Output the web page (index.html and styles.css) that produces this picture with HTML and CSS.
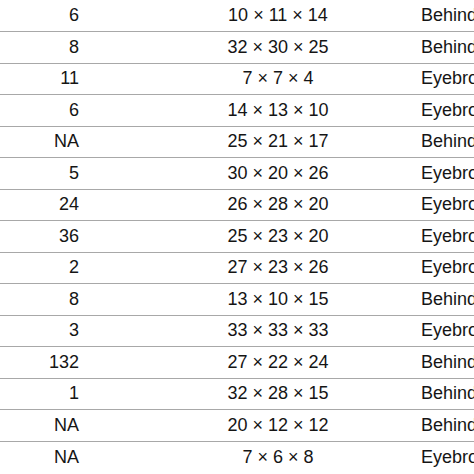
FILE: index.html
```html
<!DOCTYPE html>
<html>
<head>
<meta charset="utf-8">
<link rel="stylesheet" href="styles.css">
</head>
<body>
<div class="table">
  <div class="row"><span class="n">6</span><span class="d">10 × 11 × 14</span><span class="s">Behind ear</span></div>
  <div class="row"><span class="n">8</span><span class="d">32 × 30 × 25</span><span class="s">Behind ear</span></div>
  <div class="row"><span class="n">11</span><span class="d">7 × 7 × 4</span><span class="s">Eyebrow</span></div>
  <div class="row"><span class="n">6</span><span class="d">14 × 13 × 10</span><span class="s">Eyebrow</span></div>
  <div class="row"><span class="n">NA</span><span class="d">25 × 21 × 17</span><span class="s">Behind ear</span></div>
  <div class="row"><span class="n">5</span><span class="d">30 × 20 × 26</span><span class="s">Eyebrow</span></div>
  <div class="row"><span class="n">24</span><span class="d">26 × 28 × 20</span><span class="s">Eyebrow</span></div>
  <div class="row"><span class="n">36</span><span class="d">25 × 23 × 20</span><span class="s">Eyebrow</span></div>
  <div class="row"><span class="n">2</span><span class="d">27 × 23 × 26</span><span class="s">Eyebrow</span></div>
  <div class="row"><span class="n">8</span><span class="d">13 × 10 × 15</span><span class="s">Behind ear</span></div>
  <div class="row"><span class="n">3</span><span class="d">33 × 33 × 33</span><span class="s">Eyebrow</span></div>
  <div class="row"><span class="n">132</span><span class="d">27 × 22 × 24</span><span class="s">Behind ear</span></div>
  <div class="row"><span class="n">1</span><span class="d">32 × 28 × 15</span><span class="s">Behind ear</span></div>
  <div class="row"><span class="n">NA</span><span class="d">20 × 12 × 12</span><span class="s">Behind ear</span></div>
  <div class="row"><span class="n">NA</span><span class="d">7 × 6 × 8</span><span class="s">Eyebrow</span></div>
</div>
</body>
</html>
```
FILE: styles.css
```css
html, body {
  margin: 0;
  padding: 0;
  background: #fff;
  overflow: hidden;
}
.table {
  width: 474px;
  padding-top: 0.5px;
  font-family: "Liberation Sans", Arial, sans-serif;
  font-size: 18px;
  color: #151515;
}
.row {
  display: grid;
  grid-template-columns: 140px 276px minmax(0, 1fr);
  align-items: center;
  height: 31.5px;
  box-sizing: border-box;
  border-bottom: 1px solid #a8a8a8;
}
.row:last-child {
  border-bottom: none;
}
.n {
  text-align: right;
  padding-right: 61px;
}
.d {
  text-align: center;
  white-space: nowrap;
}
.s {
  padding-left: 5px;
  white-space: nowrap;
  overflow: hidden;
}
```
